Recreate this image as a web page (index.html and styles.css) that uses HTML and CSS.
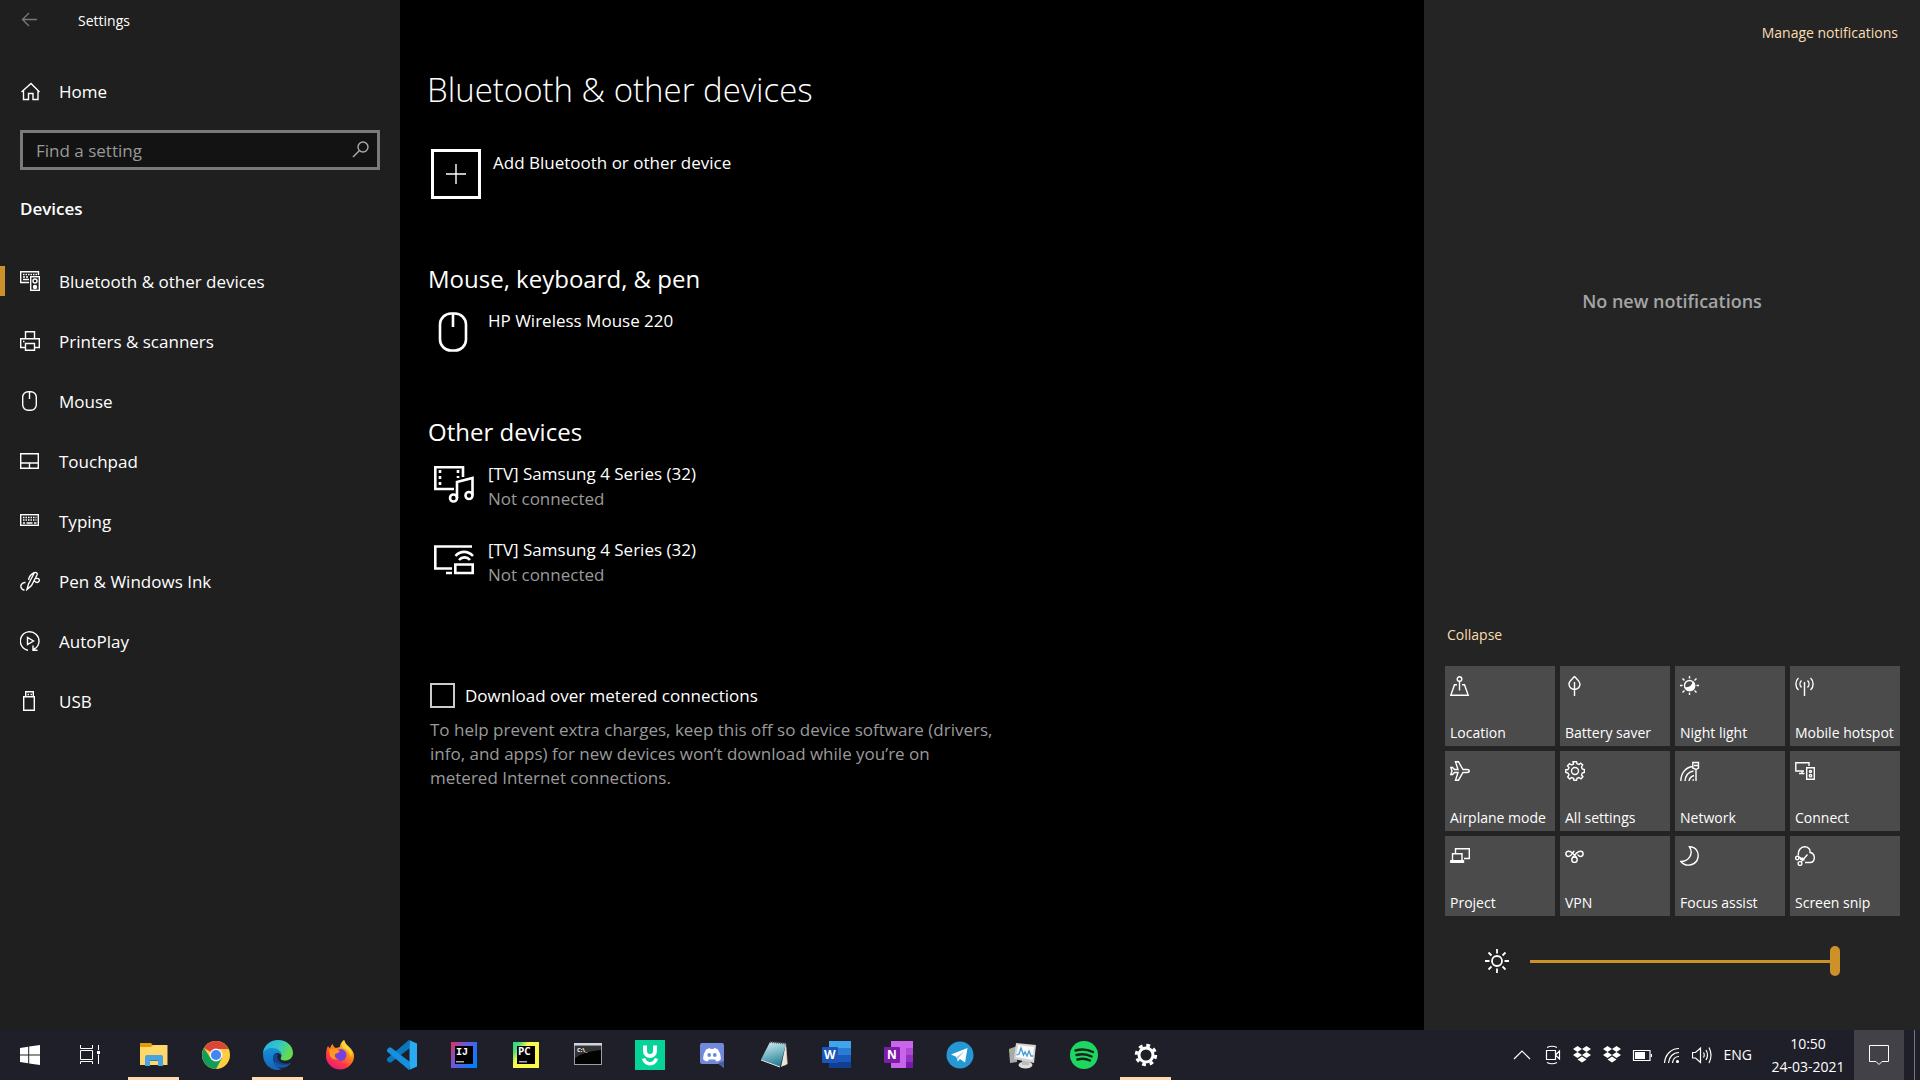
FILE: index.html
```html
<!DOCTYPE html>
<html lang="en">
<head>
    <meta charset="UTF-8">
    <meta name="viewport" content="width=device-width, initial-scale=1.0">
    <title>Settings</title>
    <link rel="stylesheet" href="styles.css">
</head>

<body>
    <div class="screen">

        <!-- Settings sidebar -->
        <aside class="sidebar">
            <div class="titlebar">
                <button class="back" type="button" aria-label="Back">
                    <svg class="icon" viewBox="0 0 20 20"><path d="M17 9.500H2.500M9 3L2.500 9.500L9 16"/></svg>
                </button>
                <span>Settings</span>
            </div>

            <a class="home" href="#">
                <svg class="icon" viewBox="0 0 20 20"><path d="M1.500 10L11 1.500L19.500 10M3.500 8.500V17.500H8.500V11.500H13V17.500H18V8.500"/></svg>
                <span>Home</span>
            </a>

            <div class="search">
                <input type="text" placeholder="Find a setting" aria-label="Find a setting">
                <svg class="icon" viewBox="0 0 20 20"><circle cx="12" cy="7" r="5"/><path d="M8.500 10.500L2 17"/></svg>
            </div>

            <h2>Devices</h2>

            <nav>
                <a class="active" href="#">
                    <svg class="icon" viewBox="0 0 20 20"><path d="M9 11.500H.7V.7H18.500V4M3 6h2M6 6h2M3 8.500h6"/><path d="M3 3.500h15" stroke-dasharray="1.500 1"/><rect x="10.700" y="5.700" width="8.600" height="13.600"/><circle cx="15" cy="10" r="2"/><circle cx="15" cy="16" r="1.500" fill="#fff"/></svg>
                    <span>Bluetooth &amp; other devices</span>
                </a>
                <a href="#">
                    <svg class="icon" viewBox="0 0 20 20"><path d="M5.500 8V.7H14.500V8M5 16.500H.7V7.700H19.300V16.500H15M5.500 12.500H14.500V19.300H5.500zM3 10.500h1.500"/></svg>
                    <span>Printers &amp; scanners</span>
                </a>
                <a href="#">
                    <svg class="icon" viewBox="0 0 20 20"><rect x="2.700" y=".7" width="13.600" height="18.600" rx="5.500"/><path d="M9.500 1v7"/></svg>
                    <span>Mouse</span>
                </a>
                <a href="#">
                    <svg class="icon" viewBox="0 0 20 20"><path d="M.7 2.700H18.300V17.300H.7zM.7 12H18.300M9.500 12v5"/></svg>
                    <span>Touchpad</span>
                </a>
                <a href="#">
                    <svg class="icon" viewBox="0 0 20 20"><rect x=".7" y="3.700" width="17.600" height="10.600"/><path d="M3 6.500h13.500M3 9h13.500" stroke-dasharray="1.500 1"/><path d="M3 12h2M6.500 12h6M14 12h2.500"/></svg>
                    <span>Typing</span>
                </a>
                <a href="#">
                    <svg class="icon" viewBox="0 0 20 20"><path d="M7 18.500L8.500 13L14 2.500C15 .5 18 1.500 17 4L11.500 14.500zM14.500 1.500C11 3 9 6 8.500 9M5.500 11.500C1.500 11 -.5 15.500 2 18C3 19 4 19 4.500 19M16 7.500C20 6.500 20.500 11 17 11.500C15.500 11.500 15 10.500 14.500 10"/></svg>
                    <span>Pen &amp; Windows Ink</span>
                </a>
                <a href="#">
                    <svg class="icon" viewBox="0 0 20 20"><path d="M8 19.200A9.300 9.300 0 1 1 14.500 18M17.500 19.300H13V14.500M13.500 18.500L15 17M7.500 6.500V13.500L13.500 10z"/></svg>
                    <span>AutoPlay</span>
                </a>
                <a href="#">
                    <svg class="icon" viewBox="0 0 20 20"><path d="M3.700 5.700H14.300V19.300H3.700zM5.700 5.500V.7H13.300V5.500M7.500 3.500H9M10.500 3.500H12"/></svg>
                    <span>USB</span>
                </a>
            </nav>
        </aside>

        <!-- Page content -->
        <main class="content">
            <h1>Bluetooth &amp; other devices</h1>

            <button class="add" type="button">
                <span class="add-box">
                    <svg class="icon" viewBox="0 0 20 20"><path d="M0 10H20M10 0V20"/></svg>
                </span>
                <span class="add-label">Add Bluetooth or other device</span>
            </button>

            <h3>Mouse, keyboard, &amp; pen</h3>
            <div class="device">
                <svg class="device-icon" viewBox="0 0 40 40"><rect x="6" y="1.500" width="26" height="37" rx="11"/><path d="M19 1v14"/></svg>
                <p>HP Wireless Mouse 220</p>
            </div>

            <h3>Other devices</h3>
            <div class="device">
                <svg class="device-icon" viewBox="0 0 40 40"><path d="M20 24H1.300V2.300H29V12"/><path d="M6 5v18M24 5v8" stroke-dasharray="3 3"/><path d="M23 33V17L38.500 13V30"/><circle cx="19.500" cy="33" r="3.500"/><circle cx="35" cy="30.500" r="3.500"/></svg>
                <p>[TV] Samsung 4 Series (32)<br><span class="muted">Not connected</span></p>
            </div>
            <div class="device">
                <svg class="device-icon" viewBox="0 0 40 40"><path d="M18 27.500H1.300V5.500H38M12 32h6M21.300 23.500H38.700V32H21.300zM21.500 15C26 9.500 34 9.500 39 15M25 19C28 15.500 33 15.500 36 19"/></svg>
                <p>[TV] Samsung 4 Series (32)<br><span class="muted">Not connected</span></p>
            </div>

            <label class="metered">
                <input type="checkbox">
                <span>Download over metered connections</span>
            </label>
            <p class="help muted">To help prevent extra charges, keep this off so device software (drivers, info, and apps) for new devices won’t download while you’re on metered Internet connections.</p>
        </main>

        <!-- Action center -->
        <aside class="action-center">
            <a class="manage" href="#">Manage notifications</a>
            <p class="empty">No new notifications</p>

            <div class="quick">
                <a class="collapse" href="#">Collapse</a>
                <div class="tiles">
                    <button type="button">
                        <svg class="icon" viewBox="0 0 20 20"><circle cx="9.500" cy="3" r="2.300"/><path d="M9.500 5.500V14.500M7 8.700H4.500L.8 19.300H18.200L14.500 8.700H12"/></svg>
                        Location
                    </button>
                    <button type="button">
                        <svg class="icon" viewBox="0 0 20 20"><path d="M9.500 6V20M9.500 13.500C6 13 4 11 4 8C4 5 7 3.500 9.500 .5C12 3.500 15 5 15 8C15 11 13 13 9.500 13.500z"/></svg>
                        Battery saver
                    </button>
                    <button type="button">
                        <svg class="icon" viewBox="0 0 20 20"><circle cx="9.500" cy="9.500" r="5"/><path fill="#fff" stroke="none" d="M12.500 5A5.500 5.500 0 1 1 4.500 11C9 12 12.500 9 12.500 5z"/><path d="M9.500 0v2.500M9.500 16.500V19M0 9.500h2.500M16.500 9.500H19M2.500 2.500L4.500 4.500M14.500 14.500L16.500 16.500M16.500 2.500L14.500 4.500M4.500 14.500L2.500 16.500"/></svg>
                        Night light
                    </button>
                    <button type="button">
                        <svg class="icon" viewBox="0 0 20 20"><path d="M9.500 6V20M3.500 2C0 5 0 11 3.500 14M15.500 2C19 5 19 11 15.500 14M6.500 4.500C4.500 6.500 4.500 9.500 6.500 11.500M12.500 4.500C14.500 6.500 14.500 9.500 12.500 11.500"/></svg>
                        Mobile hotspot
                    </button>
                    <button type="button">
                        <svg class="icon" viewBox="0 0 20 20"><path d="M.8 6.500H2.500L4.500 8.500H8L5.500 .8H8.500L13 8.500H17C20 8.500 20 11.500 17 11.500H13L8.500 19.200H5.500L8 11.500H4.500L2.500 13.500H.8L2 10z"/></svg>
                        Airplane mode
                    </button>
                    <button type="button">
                        <svg class="icon" viewBox="0 0 20 20"><circle cx="10" cy="10" r="3.500"/><path d="M8 .8L8.500 3L6.500 4L4.500 2.700L2.500 4.700L4 6.500L3 8.500L.8 8.700V11.500L3 12L4 14L2.700 16L4.700 18L6.500 16.500L8.500 17.300L9 19.300H11.500L12 17.300L14 16.500L16 17.800L17.900 15.700L16.500 14L17.200 12L19.300 11.500V8.500L17.200 8L16.500 6L17.700 4L15.700 2.200L14 3.500L12 2.700L11.500 .8z"/></svg>
                        All settings
                    </button>
                    <button type="button">
                        <svg class="icon" viewBox="0 0 20 20"><path d="M.8 20C1 12 5.500 6.500 12.500 5.500M5 20C5.500 14.500 8.500 11 13.500 10M9 20C9.500 17 11 15.500 14 14.500M16 9V20M12.800 1.500H18.500V7L16 8.500L12.800 7zM14 4.500H18M12.500 19h1.500"/></svg>
                        Network
                    </button>
                    <button type="button">
                        <svg class="icon" viewBox="0 0 20 20"><path d="M9 10H.8V1.700H14V5M4 12.500H9.500M7 10v2.500M11.700 6.700H19.300V18.300H11.700z"/><circle cx="15.500" cy="10.500" r="1"/><circle cx="15.500" cy="14.700" r="1.200"/></svg>
                        Connect
                    </button>
                    <button type="button">
                        <svg class="icon" viewBox="0 0 20 20"><path d="M5.500 7V2.700H19.300V12.500H14M2.500 14V7.700H12V14M.8 14.700H13.500V16.300H.8z"/></svg>
                        Project
                    </button>
                    <button type="button">
                        <svg class="icon" viewBox="0 0 20 20"><path d="M11.500 11.500C9.500 9.500 7.500 5.200 3.500 5.200C0 5.200 0 10.500 3.500 10.500C7 10.500 7.500 5.200 9.500 5.200M7.500 11.500C10 9.500 11.500 5.200 15.500 5.200C19 5.200 19 10.500 15.500 10.500C14 10.500 13.500 9.500 12.500 8.500"/><circle cx="9.500" cy="13.700" r="2.700"/></svg>
                        VPN
                    </button>
                    <button type="button">
                        <svg class="icon" viewBox="0 0 20 20"><path d="M9.500 .8C16 1 19 6 18 11.500C16.500 19 6.500 22 .8 15.500C8.500 15.500 14 8 9.500 .8z"/></svg>
                        Focus assist
                    </button>
                    <button type="button">
                        <svg class="icon" viewBox="0 0 20 20"><path d="M3.500 9.500C2.500 4.500 6 .8 9.500 .8C13.500 .8 15.500 3.500 15 6.500C21 7.500 20.500 16.500 15 16.500H10M3.500 11L9.500 14M6 16L12.500 8.500M5 13.500L8 12"/><circle cx="2.300" cy="12" r="1.700"/><circle cx="5" cy="17.500" r="1.900"/></svg>
                        Screen snip
                    </button>
                </div>

                <div class="brightness">
                    <svg class="sun" viewBox="0 0 24 24"><circle cx="12" cy="12" r="5"/><path d="M12 0V4.500M12 19.500V24M0 12H4.500M19.500 12H24M3.500 3.500L6.500 6.500M17.500 17.500L20.500 20.500M20.500 3.500L17.500 6.500M6.500 17.500L3.500 20.500"/></svg>
                    <input type="range" min="0" max="100" value="100" aria-label="Brightness">
                </div>
            </div>
        </aside>
    </div>

    <!-- Taskbar -->
    <footer class="taskbar">
        <button class="system" type="button" aria-label="Start">
            <svg viewBox="0 0 30 30"><path fill="#fff" d="M5 8L13.200 6.800V14.400H5zM14.200 6.600L25 5V14.400H14.200zM5 15.600H13.200V23.200L5 22zM14.200 15.600H25V25L14.200 23.400z"/></svg>
        </button>
        <button class="system" type="button" aria-label="Task view">
            <svg viewBox="0 0 30 30" fill="none" stroke="#fff"><path d="M5.500 5V8.500H17.500V5M5.500 10.500H17.500V19.500H5.500zM5.500 24V21.500H17.500V24M23.500 5V10M23.500 14.500V24"/><path fill="#fff" stroke="none" d="M22 11h3v3h-3z"/></svg>
        </button>

        <div class="apps">
            <button class="open" type="button" aria-label="File Explorer">
                <svg viewBox="0 0 30 30"><path fill="#e19b05" d="M1 3H12L14 5.500V9H1z"/><path fill="#ffd76a" d="M1 7H12L14 5H28.500V25H1z"/><path fill="#4aa3df" d="M6 26V17Q6 15 8 15H22Q24 15 24 17V26H19V20H11V26z"/><path fill="#2b7fc0" d="M11 20H19V21H11z"/></svg>
            </button>
            <button type="button" aria-label="Chrome">
                <svg viewBox="0 0 30 30"><circle cx="15" cy="15" r="14" fill="#ffcd41"/><path fill="#db4437" d="M2.900 8A14 14 0 0 1 27.100 8L27 9H15V15z"/><path fill="#0f9d58" d="M2.900 8A14 14 0 0 0 15 29L21 18L15 15L9.500 18z"/><circle cx="15" cy="15" r="6.500" fill="#f1f1f1"/><circle cx="15" cy="15" r="5" fill="#4285f4"/></svg>
            </button>
            <button class="open" type="button" aria-label="Edge">
                <svg viewBox="0 0 30 30">
                    <defs>
                        <linearGradient id="edge-top" x1="0" x2="1" y2=".4"><stop stop-color="#2fa8e8"/><stop offset=".55" stop-color="#33c7c4"/><stop offset="1" stop-color="#65dc4b"/></linearGradient>
                        <linearGradient id="edge-left" y2="1" x2="0"><stop stop-color="#1691d8"/><stop offset="1" stop-color="#1364b8"/></linearGradient>
                    </defs>
                    <path fill="url(#edge-top)" d="M0 14C0 6 7 0 15 0C24 0 30 6 30 13C30 18 26 20.500 22 20.500C18 20.500 17 19 18 17.500C20 13 15 9 10 9C5 9 1 11 0 14z"/>
                    <path fill="url(#edge-left)" d="M0 14C1 10 5 8 9 8C15 8 19 12 18.500 16C18 13 12 11 10.500 16C9 22 14 28 19 29.500C9 32 0 25 0 14z"/>
                    <path fill="#0e458c" d="M11 14.500C8 21 13 27 19 27.200C23 27.200 27 24 28 22.500C23 25 16 23.500 14.500 18C14 16 15 14.500 15 14.500C13 13 11.500 13.500 11 14.500z"/>
                    <path fill="#155aa8" d="M11 25C17 30 25 28 28 22.500C24 26 17 26 12 22z"/>
                </svg>
            </button>
            <button type="button" aria-label="Firefox">
                <svg viewBox="0 0 30 30">
                    <defs><linearGradient id="fox" x1=".8" y1="0" x2=".2" y2="1"><stop stop-color="#ffec3d"/><stop offset=".4" stop-color="#ff8a16"/><stop offset=".7" stop-color="#ff3647"/><stop offset="1" stop-color="#e31587"/></linearGradient></defs>
                    <path fill="url(#fox)" d="M3 6Q4 8 5 8Q6 5 8 4Q8 7 11 8L15 7Q15 3 19 0Q20 4 24 7Q29 11 29 16A14 13.500 0 0 1 1 16Q1 9 3 6z"/>
                    <circle cx="15.500" cy="15" r="6" fill="#7a3fe0"/>
                    <path fill="#ff9a1a" d="M4 10Q9 8 13 10L15 11Q14 13 10 14Q9 19 14 19Q8 21 5 16z"/>
                    <path fill="#ffd43a" d="M19 0Q20 4 24 7Q28 11 26 17Q24 10 18 8Q16 4 19 0z"/>
                </svg>
            </button>
            <button type="button" aria-label="Visual Studio Code">
                <svg viewBox="0 0 30 30"><path fill="#0a77bd" d="M22 0L0 18.500V20.500L2 22.500L4 22.500L23 8z"/><path fill="#1490df" d="M4 7.500L2 7.500L0 9.500V11.500L22 30L23 22z"/><path fill="#2aaaf2" d="M22 0L30 3.500V26.500L22 30Q22.500 29.500 22.500 28.500V1.500Q22.500 .5 22 0z"/></svg>
            </button>
            <button type="button" aria-label="IntelliJ IDEA">
                <svg viewBox="0 0 30 30">
                    <defs><linearGradient id="ij" x2="1" y2=".6"><stop stop-color="#e0315d"/><stop offset=".45" stop-color="#6b57dc"/><stop offset="1" stop-color="#087cfa"/></linearGradient></defs>
                    <rect x="2" y="2" width="26" height="26" fill="url(#ij)"/><rect x="6" y="6" width="18" height="18"/>
                    <text class="logo-mono" x="7" y="15">IJ</text><path fill="#aaa" d="M7 21h8v1.500H7z"/>
                </svg>
            </button>
            <button type="button" aria-label="PyCharm">
                <svg viewBox="0 0 30 30">
                    <defs><linearGradient id="pc" x2=".7" y2=".5"><stop stop-color="#21d789"/><stop offset=".3" stop-color="#55dc79"/><stop offset=".6" stop-color="#fcf84a"/></linearGradient></defs>
                    <rect x="2" y="2" width="26" height="26" fill="url(#pc)"/><rect x="6" y="6" width="18" height="18"/>
                    <text class="logo-small" x="7" y="15">PC</text><path fill="#aaa" d="M8 21h8v1.500H8z"/>
                </svg>
            </button>
            <button type="button" aria-label="Command Prompt">
                <svg viewBox="0 0 30 30"><rect x="1" y="3" width="28" height="22" fill="#9aa0a3"/><rect x="2" y="5.500" width="26" height="18.500" fill="#020202"/><path fill="#333" d="M2 5.500H28V10Q12 11 2 18z"/><path fill="#cfd5dd" d="M1 3H29V5.500H1z"/><text class="logo-prompt" x="4" y="12">C:\_</text></svg>
            </button>
            <button type="button" aria-label="Upwork">
                <svg viewBox="0 0 30 30" fill="none" stroke="#fff" stroke-width="4"><rect width="30" height="30" fill="#04d39a" stroke="none"/><path d="M10 5.500V11C10 17.500 20 17.500 20 11V5.500"/><path d="M8.500 18.500C11 25.500 19 25.500 21.500 18.500" stroke-width="3.500"/></svg>
            </button>
            <button type="button" aria-label="Discord">
                <svg viewBox="0 0 30 30"><path fill="#7289da" d="M3 5Q3 3 5 3H25Q27 3 27 5V28L22 24H5Q3 24 3 22z"/><path fill="#4c60a5" d="M21 23L27 28V21z"/><path fill="#fff" d="M9 9.500Q12 8 13 8L13.500 9H16.500L17 8Q19 8 21 9.500Q24 14 24 19Q22 21.500 19.500 21.500L18 19.500H12L10.500 21.500Q8 21.500 6 19Q6 14 9 9.500z"/><circle cx="12.200" cy="15" r="1.900" fill="#7289da"/><circle cx="17.800" cy="15" r="1.900" fill="#7289da"/></svg>
            </button>
            <button type="button" aria-label="Notepad">
                <svg viewBox="0 0 30 30">
                    <defs><linearGradient id="np" y2="1" x2=".3"><stop stop-color="#dff2f4"/><stop offset=".5" stop-color="#80bdcb"/><stop offset="1" stop-color="#2c8397"/></linearGradient></defs>
                    <path fill="#b38a42" d="M27 5L29 24L25 26z"/><path fill="#e6e6e2" d="M27 3L28 24L22 27z"/><path fill="url(#np)" d="M11 2L27 3.500L21 27L2 19.500z"/><path fill="none" stroke="#eee" d="M2 20L21 27"/><path fill="none" stroke="#555" stroke-width="2" stroke-dasharray="1 1" d="M11 2L27 3.500"/>
                </svg>
            </button>
            <button type="button" aria-label="Word">
                <svg viewBox="0 0 30 30"><path fill="#41a5ee" d="M8 1H30V8H8z"/><path fill="#2b7cd3" d="M8 8H30V15H8z"/><path fill="#185abd" d="M8 15H30V22H8z"/><path fill="#103f91" d="M8 22H30V28H8z"/><rect x="1" y="7" width="16" height="16" rx="1" fill="#1b56b8"/><text class="logo-letter" x="3" y="19">W</text></svg>
            </button>
            <button type="button" aria-label="OneNote">
                <svg viewBox="0 0 30 30"><path fill="#ca64ea" d="M8 1H30V28H8z"/><path fill="#ae4bd5" d="M23 8H30V15H23z"/><path fill="#9332bf" d="M23 15H30V22H23z"/><path fill="#7719aa" d="M23 22H30V28H23z"/><rect x="1" y="7" width="16" height="16" rx="1" fill="#7f1cae"/><text class="logo-letter" x="4" y="19">N</text></svg>
            </button>
            <button type="button" aria-label="Telegram">
                <svg viewBox="0 0 30 30"><circle cx="15" cy="15" r="13.500" fill="#2497d4"/><path fill="#fff" d="M6 14.500L22.500 8L20 22.500L15 19L12.500 21.500L11.500 17z"/><path fill="#a9cfe5" d="M11.500 17L20 10.500L13.500 18L12.500 21.500z"/></svg>
            </button>
            <button type="button" aria-label="Resource Monitor">
                <svg viewBox="0 0 30 30"><path fill="#aaa" d="M2 9L10 6V22L3 23z"/><path fill="#7fd13b" d="M2 10l2-.5v2l-2 .5z"/><ellipse cx="18.500" cy="25" rx="7" ry="3.500" fill="#ddd"/><path fill="#bbb" d="M15 20h7v5h-7z"/><path fill="#d3d3d3" d="M9 3L29 5L27 23L7 19z"/><path fill="#fafafa" d="M11 5L27 7L25.500 20L9 17z"/><path fill="none" stroke="#3f9bd2" stroke-width="1.300" d="M9.500 15L12 14L14 8L16.500 15L18 12L20 16L22 11L24 16H26"/></svg>
            </button>
            <button type="button" aria-label="Spotify">
                <svg viewBox="0 0 30 30"><circle cx="15" cy="15" r="14" fill="#1ed760"/><path fill="none" stroke="#15251b" stroke-width="2.500" stroke-linecap="round" d="M6.500 10.500C13 8.500 19 9.500 24 12M7.500 15C13 13.500 18 14 22.500 16.500M8.500 19.500C13 18 17 18.500 21 20.500"/></svg>
            </button>
            <button class="open" type="button" aria-label="Settings">
                <svg viewBox="0 0 30 30" fill="none" stroke="#fff"><circle cx="15" cy="15" r="7" stroke-width="3"/><circle cx="15" cy="15" r="9.700" stroke-width="3" stroke-dasharray="3.810 3.809"/></svg>
            </button>
        </div>

        <div class="tray">
            <svg viewBox="0 0 20 20"><path d="M2 14L10 6L18 14"/></svg>
            <svg viewBox="0 0 20 20"><path d="M4.500 5.500H13.500V14.500H4.500zM13.500 10L17.500 6V14zM5 2.500Q10 0 15 2.500M5 17.500Q10 20 15 17.500"/></svg>
            <svg class="solid" viewBox="0 0 20 20"><path d="M5.500 1L10 4L5.500 7L1 4zM14.500 1L19 4L14.500 7L10 4zM5.500 7L10 10L5.500 13L1 10zM14.500 7L19 10L14.500 13L10 10zM10 11.500L14.500 14.500L10 17.500L5.500 14.500z"/></svg>
            <svg class="solid" viewBox="0 0 20 20"><path d="M5.500 1L10 4L5.500 7L1 4zM14.500 1L19 4L14.500 7L10 4zM5.500 7L10 10L5.500 13L1 10zM14.500 7L19 10L14.500 13L10 10zM10 11.500L14.500 14.500L10 17.500L5.500 14.500z"/></svg>
            <svg viewBox="0 0 20 20"><path d="M1.500 5.500H18V15.500H1.500zM19.500 9v3"/><path fill="#fff" stroke="none" d="M3 7H13V14H3z"/></svg>
            <svg viewBox="0 0 20 20"><path d="M2.500 18C3 10 9 3.500 17 3.500M6.500 18C7 12 11 7.500 17 7.500M10.500 18C11 14 13.500 11.500 17 11.500"/><circle cx="15.500" cy="16.500" r="1" fill="#fff"/></svg>
            <svg viewBox="0 0 20 20"><path d="M.5 7.500H3.500L8.500 3V17.500L3.500 13H.5zM11.500 7.500Q13 10 11.500 12.500M14 5Q17 10 14 15M17 2.500Q21 10 17 18"/></svg>
            <span class="lang">ENG</span>
            <time class="clock" datetime="2021-03-24T10:50">10:50<br>24-03-2021</time>
        </div>
        <button class="notify" type="button" aria-label="Notifications">
            <svg viewBox="0 0 30 30" fill="none" stroke="#fff"><path d="M5.500 5.500H24.500V21.500H18L15 24.500L12 21.500H5.500z"/></svg>
        </button>
        <div class="show-desktop"></div>
    </footer>
</body>
</html>
```

FILE: styles.css
```css
* {
    box-sizing: border-box;
}

body {
    margin: 0;
    min-height: 100vh;
    display: flex;
    flex-direction: column;
    background: #000;
    color: #fff;
    font-family: "Open Sans", "Noto Sans", sans-serif;
    font-size: 17px;
    line-height: 24px;
}

h1, h2, h3, p {
    margin: 0;
    font-weight: 400;
}

a {
    color: inherit;
    text-decoration: none;
}

button {
    padding: 0;
    border: 0;
    background: none;
    color: inherit;
    font: inherit;
    text-align: left;
}

svg {
    display: block;
    flex-shrink: 0;
}

.icon {
    width: 20px;
    height: 20px;
    fill: none;
    stroke: #fff;
    stroke-width: 1.4;
}

.muted {
    color: #9a9a9a;
}

.screen {
    flex: 1;
    display: flex;
}

/* sidebar */
.sidebar {
    width: 400px;
    flex-shrink: 0;
    background: #1f1f1f;
}

.sidebar nav span,
.titlebar span,
.search input {
    padding-top: 2px;
}

.titlebar {
    display: flex;
    align-items: center;
    gap: 38px;
    height: 40px;
    padding-left: 20px;
    font-size: 14px;
}

.back .icon {
    stroke: #777;
}

.home {
    display: flex;
    align-items: center;
    gap: 19px;
    height: 60px;
    margin-top: 22px;
    padding-left: 20px;
}

.search {
    display: flex;
    align-items: center;
    height: 40px;
    margin: 8px 20px 0;
    padding-right: 6px;
    border: 3px solid #7a7a7a;
    background: #131313;
}

.search input {
    flex: 1;
    min-width: 0;
    padding-left: 13px;
    border: 0;
    outline: 0;
    background: none;
    color: #fff;
    font: inherit;
}

.search input::placeholder {
    color: #999;
    opacity: 1;
}

.search .icon {
    stroke: #aaa;
}

.sidebar h2 {
    margin: 27px 20px 0;
    font-size: 17px;
    font-weight: 600;
}

.sidebar nav {
    margin-top: 30px;
}

.sidebar nav a {
    display: flex;
    align-items: center;
    gap: 19px;
    height: 60px;
    padding-left: 20px;
}

.sidebar nav .active {
    padding-left: 15px;
}

.sidebar nav .active::before {
    content: "";
    width: 5px;
    height: 30px;
    margin: 0 -4px 0 -15px;
    background: #cc9129;
}

/* content */
.content {
    flex: 1;
    padding: 66px 28px 0 27px;
}

h1 {
    font-size: 33px;
    font-weight: 300;
    line-height: 48px;
}

.add {
    display: flex;
    gap: 12px;
    margin: 35px 0 0 4px;
}

.add-box {
    display: flex;
    align-items: center;
    justify-content: center;
    width: 50px;
    height: 50px;
    border: 3px solid #fff;
}

.add-label {
    padding-top: 2px;
}

h3 {
    margin: 64px 0 0 1px;
    font-size: 24px;
    line-height: 32px;
}

.device {
    display: flex;
    gap: 14px;
    height: 44px;
    margin: 13px 0 0 7px;
    line-height: 25px;
}

.device + .device {
    margin-top: 32px;
}

.device-icon {
    width: 40px;
    height: 40px;
    margin-top: 4px;
    fill: none;
    stroke: #fff;
    stroke-width: 2.6;
}

.metered {
    display: flex;
    align-items: center;
    gap: 10px;
    margin: 102px 0 0 3px;
}

.metered input {
    appearance: none;
    width: 25px;
    height: 25px;
    margin: 0;
    border: 2px solid #ccc;
}

.help {
    max-width: 568px;
    margin: 10px 0 0 3px;
}

/* action center */
.action-center {
    display: flex;
    flex-direction: column;
    width: 496px;
    flex-shrink: 0;
    background: #242424;
    font-size: 14px;
}

.manage,
.collapse {
    color: #f8deb0;
}

.manage {
    align-self: flex-end;
    margin: 21px 22px 0 0;
}

.empty {
    margin-top: 244px;
    color: #a5a5a5;
    font-size: 18px;
    font-weight: 600;
    text-align: center;
}

.quick {
    margin-top: auto;
    padding: 0 20px 54px 21px;
}

.collapse {
    margin-left: 2px;
}

.tiles {
    display: grid;
    grid-template-columns: repeat(4, 1fr);
    gap: 5px;
    margin-top: 19px;
}

.tiles button {
    display: flex;
    flex-direction: column;
    justify-content: space-between;
    height: 80px;
    padding: 10px 0 1px 5px;
    background: #4b4b4b;
    white-space: nowrap;
}

.brightness {
    display: flex;
    align-items: center;
    gap: 21px;
    margin-top: 30px;
    padding: 0 60px 0 40px;
}

.sun {
    width: 24px;
    height: 24px;
    fill: none;
    stroke: #fff;
    stroke-width: 1.8;
}

.brightness input {
    appearance: none;
    flex: 1;
    height: 30px;
    margin: 0;
    background: linear-gradient(#cc9129, #cc9129) center / 100% 3px no-repeat;
}

.brightness input::-webkit-slider-thumb {
    appearance: none;
    width: 10px;
    height: 30px;
    border-radius: 5px;
    background: #cc9129;
}

/* taskbar */
.taskbar {
    display: flex;
    height: 50px;
    background: #1f1f29;
}

.taskbar > button svg,
.apps svg {
    width: 30px;
    height: 30px;
    margin: 0 auto;
}

.system {
    width: 60px;
}

.apps {
    display: flex;
    gap: 11px;
    margin-left: 8px;
}

.apps button {
    width: 51px;
    border-bottom: 3px solid transparent;
    padding-top: 3px;
}

.apps .open {
    border-color: #ffdab0;
}

.logo-mono,
.logo-small,
.logo-letter,
.logo-prompt {
    fill: #fff;
    font-weight: 700;
}

.logo-mono {
    font-family: "Liberation Mono", monospace;
    font-size: 10px;
}

.logo-small {
    font-size: 10px;
}

.logo-letter {
    font-size: 12px;
}

.logo-prompt {
    font-size: 6px;
}

.tray {
    display: flex;
    align-items: center;
    gap: 10px;
    margin-left: auto;
    font-size: 14px;
}

.tray svg {
    width: 20px;
    height: 20px;
    fill: none;
    stroke: #fff;
    stroke-width: 1.2;
}

.tray .solid {
    fill: #fff;
    stroke: none;
}

.lang {
    margin-left: 2px;
}

.clock {
    width: 92px;
    line-height: 23px;
    text-align: center;
}

.notify {
    width: 50px;
    background: #424147;
}

.show-desktop {
    width: 6px;
    margin-left: 10px;
    border-left: 1px solid #77777d;
}
```
